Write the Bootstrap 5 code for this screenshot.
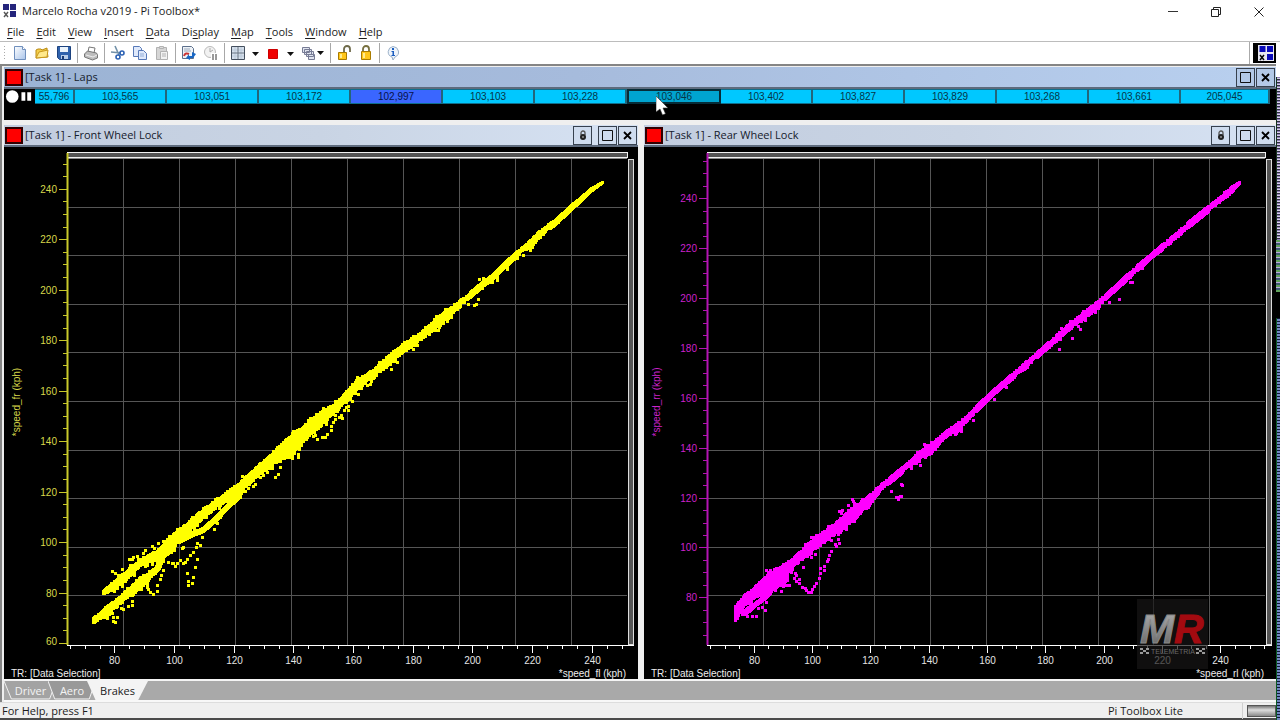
<!DOCTYPE html>
<html lang="en">
<head>
<meta charset="utf-8">
<meta name="viewport" content="width=device-width, initial-scale=1">
<title>Marcelo Rocha v2019 - Pi Toolbox*</title>
<link rel="stylesheet" href="https://cdn.jsdelivr.net/npm/bootstrap@5.3.0/dist/css/bootstrap.min.css">
<style>
  body { font: 12px/16px "Open Sans", "Noto Sans", sans-serif; color: #1c1c1c; background: #fff; }
  button { font: inherit; color: inherit; background: none; border: 0; padding: 0; }
  .ui-text { font-size: 11px; }
  .app-title { height: 22px; padding-left: 2px; }
  .win-btn { width: 43px; height: 22px; }
  .menu-row { height: 19px; gap: 12px; padding-left: 7px; }
  .menu-row a { color: #1c1c1c; text-decoration: none; }
  .menu-row u { text-underline-offset: 2px; }
  .tool-row { height: 23px; border-top: 1px solid #bcbcbc; padding-left: 9px; background: repeating-linear-gradient(180deg, #aaa 0 1px, transparent 1px 3px) no-repeat 4px 4px / 1px 15px; }
  .tool { width: 22px; height: 22px; }
  .tool-drop { width: 13px; }
  .tool-layers { width: 31px; }
  .tool-sep { width: 5px; height: 20px; background: linear-gradient(90deg, transparent 2px, #a8a8a8 2px, #a8a8a8 3px, transparent 3px); }
  .mdi-icon { width: 27px; height: 22px; border-left: 1px solid #aaa; padding-left: 3px; }
  .screen-edge { width: 4px; }
  .edge-noise { background:
      repeating-linear-gradient(180deg, #8f7fb8 0 1px, #d8d4e8 1px 2px, #303040 2px 3px);
      border-left: 1px solid #16341e; }
  .edge-mixed { background: repeating-linear-gradient(180deg, #62a35c 0 2px, #b9a8d8 2px 3px, #3c5a70 3px 5px); }
  .edge-blue { background: repeating-linear-gradient(180deg, #101838 0 1px, #7088c0 1px 3px); border-left: 1px solid #0a5a20; }
  .workspace { background: #efefef; border-top: 2px solid #858585; border-left: 2px solid #858585; padding: 1px 0 0 2px; }
  .panel-head { height: 22px; padding: 1px; border-bottom: 2px solid #5e6b7d; color: #15202c; }
  .laps-head { background: linear-gradient(90deg, #9bb3d4, #a6bbdc 45%, #b9d0ef); }
  .plot-head { background: linear-gradient(90deg, #c2cddf, #c9d4e4 50%, #d6e2f3); }
  .task-mark { width: 18px; height: 17px; background: #f00; border: 2px solid #300000; margin-right: 2px; }
  .frame-btn { width: 19px; height: 19px; border: 1px solid #37414e; background: #cfdcee; }
  .frame-max { margin-right: 1px; }
  .frame-lock { margin-right: 6px; }
  .laps-head .frame-btn { background: #b3c9e7; }
  .laps-body { background: #000; height: 31px; padding-right: 6px; }
  .laps-ctl { width: 31px; height: 15px; padding-left: 1px; }
  .lap { flex: 92 1 0; height: 15px; background: #00c8ff; border-right: 2px solid #24657a; border-top: 1px solid #0f6f8c; border-bottom: 1px solid #0f6f8c; color: #063446; font: 10px/13px "Liberation Sans", Arial, sans-serif; }
  .lap-part { flex-grow: 39; }
  .lap-end { flex-grow: 89; }
  .lap-best { background: #3a66ff; color: #06124a; }
  .lap-on { background: #00a4d0; border: 2px solid #062c38; line-height: 11px; }
  .pointer { left: 27px; top: 5px; z-index: 2; }
  .plots { gap: 6px; padding-top: 5px; }
  .plot-panel { flex: 634 1 0; min-width: 0; }
  .plot-panel + .plot-panel { flex-grow: 632; }
  .plot-body { background: #000; }
  .plot { flex: 1 1 0; width: 100%; min-height: 260px; display: block; font: 10px "Liberation Sans", Arial, sans-serif; }
  .brand { right: 68px; bottom: 10px; }
  .tab-row { height: 23px; background: #a9a9a9; border-top: 2px solid #f4f4f4; border-bottom: 2px solid #f8f8f8; }
  .sheet-tab { height: 19px; margin-right: -9px; color: #f4f4f4; font-size: 11px; line-height: 18px; }
  .sheet-tab svg { left: 0; top: 0; width: 100%; height: 100%; }
  .sheet-tab.is-on { color: #222; }
  .tab-a { width: 53px; } .tab-b { width: 48px; } .tab-c { width: 61px; }
  .status-row { height: 18px; background: #efefef; border-top: 1px solid #ddd; border-bottom: 2px solid #4a4a4a; padding-left: 2px; }
  .status-name { width: 135px; border-right: 1px solid #cfcfcf; }
  .status-grip { width: 29px; height: 12px; margin-left: 4px; border: 1px solid #555; background: linear-gradient(#777, #ddd 40%, #8a8a8a); }
</style>
</head>
<body>
<div class="d-flex flex-column min-vh-100">
  <header>
    <div class="app-title d-flex align-items-center ui-text">
      <svg width="16" height="16" viewBox="0 0 16 16" class="me-1"><path fill="#25257c" d="M1 1h6v6H1zM8 1h6v6H8zM8 8h6v6H8z"/><path d="M2 9l4 5M6 9l-4 5" stroke="#555" stroke-width="1.4"/></svg>
      <span class="flex-grow-1">Marcelo Rocha v2019 - Pi Toolbox*</span>
      <button class="win-btn" aria-label="Minimize"><svg width="12" height="12"><path d="M1 5.500h10" stroke="#333"/></svg></button>
      <button class="win-btn" aria-label="Restore"><svg width="12" height="12" fill="none" stroke="#222"><path d="M1.500 3.500h7v7h-7zM3.500 3.500v-2h7v7h-2"/></svg></button>
      <button class="win-btn" aria-label="Close"><svg width="12" height="12"><path d="M1.500 1.500l9 9M10.500 1.500l-9 9" stroke="#222"/></svg></button>
    </div>
    <nav class="menu-row d-flex align-items-center ui-text">
      <a href="#"><u>F</u>ile</a><a href="#"><u>E</u>dit</a><a href="#"><u>V</u>iew</a><a href="#"><u>I</u>nsert</a><a href="#"><u>D</u>ata</a><a href="#">Di<u>s</u>play</a><a href="#"><u>M</u>ap</a><a href="#"><u>T</u>ools</a><a href="#"><u>W</u>indow</a><a href="#"><u>H</u>elp</a>
    </nav>
    <div class="tool-row d-flex align-items-center" role="toolbar" aria-label="Standard">
      <button class="tool" aria-label="New"><svg width="16" height="16"><defs><linearGradient id="pg" x2="1" y2="1"><stop stop-color="#fff"/><stop offset="1" stop-color="#a9c4ea"/></linearGradient></defs><path d="M2.500 1.500h8l3 3v10h-11z" fill="url(#pg)" stroke="#6f8fbd"/><path d="M10.500 1.500v3h3" fill="#fff" stroke="#6f8fbd"/></svg></button>
      <button class="tool" aria-label="Open"><svg width="16" height="16"><path d="M2 13V5l2-1 3 0 1 1 5-2v2l1 7z" fill="#f4cf4a" stroke="#b98a14"/><path d="M2 13L5 7l9-2-1 7z" fill="#ffe98c" stroke="#c9981c"/></svg></button>
      <button class="tool" aria-label="Save"><svg width="16" height="16"><path d="M1.500 1.500h13v13h-11l-2-2z" fill="#2f62ad" stroke="#1c427f"/><path d="M4 2h8v5H4z" fill="#eaf3fc"/><path d="M5 10h7v4H5z" fill="#b9cde8"/><path d="M6 11h2v3H6z" fill="#173a75"/></svg></button>
      <span class="tool-sep"></span>
      <button class="tool" aria-label="Print"><svg width="16" height="16" stroke="#777"><path d="M5 7l1-5 6 1-1 5z" fill="#fff"/><path d="M1.500 9l3-3 9 2 1 2v3l-5 2-8-3z" fill="#bdbdbd"/><path d="M3 10l7 2 4-2" fill="none" stroke="#eee"/></svg></button>
      <span class="tool-sep"></span>
      <button class="tool" aria-label="Cut"><svg width="16" height="16" fill="none" stroke-width="1.6"><path d="M5 1l4 9M1 7l10 1" stroke="#7090a8"/><circle cx="12" cy="8" r="2" stroke="#2c62b4"/><circle cx="8" cy="12" r="2" stroke="#2c62b4"/></svg></button>
      <button class="tool" aria-label="Copy"><svg width="16" height="16" fill="#dfe9fb" stroke="#5779b8"><path d="M1.500 1.500h6l2 2v8h-8z"/><path d="M6.500 5.500h5l3 3v6h-8z"/><path d="M8 9h4M8 11h4" stroke="#93add8"/></svg></button>
      <button class="tool" aria-label="Paste"><svg width="16" height="16" stroke="#b2b2b2"><path d="M2.500 2.500h10v12h-10z" fill="#d6d6d6"/><path d="M5.500 1.500h4v2h-4z" fill="#ddd"/><path d="M6.500 6.500h7v8h-7z" fill="#f2f2f2"/><path d="M8 9h4M8 11h4"/></svg></button>
      <span class="tool-sep"></span>
      <button class="tool" aria-label="Update data"><svg width="16" height="16"><path d="M1.500 1.500h9l2 2v10h-11z" fill="#eef2f7" stroke="#5c6f8b"/><path d="M3 4h6M3 6h7" stroke="#9aa8ba"/><path d="M3 11c1-3 3-3 5-2" fill="none" stroke="#c33" stroke-width="2"/><path d="M5 13l3-4v2h3V7l4 2-3 4H9v2z" fill="#1867c4"/></svg></button>
      <button class="tool" aria-label="Pause clock"><svg width="16" height="16"><circle cx="7" cy="7" r="5.500" fill="#f2f2f2" stroke="#bbb"/><path d="M7 3v4l3-2" fill="none" stroke="#aaa"/><path d="M8 8h8v8H8z" fill="#fff"/><path d="M9 9h2v6H9zM12 9h2v6h-2z" fill="#999"/></svg></button>
      <span class="tool-sep"></span>
      <button class="tool" aria-label="Grid"><svg width="16" height="16"><path d="M1.500 1.500h13v13h-13z" fill="#d5dfeb" stroke="#444f5e"/><path d="M5 2v12M11 2v12M2 5h12M2 11h12" stroke="#bccada"/><path d="M8 2v12M2 8h12" stroke="#6a7684"/></svg></button>
      <button class="tool-drop" aria-label="Grid options"><svg width="7" height="4"><path d="M0 0h7l-3.500 4z" fill="#111"/></svg></button>
      <button class="tool" aria-label="Colour"><svg width="16" height="16"><path d="M3.500 4.500h9v9h-9z" fill="#f00000" stroke="#c00"/></svg></button>
      <button class="tool-drop" aria-label="Colour options"><svg width="7" height="4"><path d="M0 0h7l-3.500 4z" fill="#111"/></svg></button>
      <button class="tool-layers d-flex align-items-center justify-content-center" aria-label="Window layout"><svg width="16" height="16" fill="#dfe3ee" stroke="#777c95"><path d="M1.500 2.500h7v5h-7zM3.500 4.500h7v5h-7zM5.500 6.500h7v5h-7zM7.500 9.500h6v5h-6z"/></svg><svg width="7" height="4"><path d="M0 0h7l-3.500 4z" fill="#111"/></svg></button>
      <span class="tool-sep"></span>
      <button class="tool" aria-label="Unlock"><svg width="16" height="16"><path d="M8 8V4a3 3 0 0 1 6 0v3" fill="none" stroke="#6e6a4a" stroke-width="1.800"/><path d="M2.500 7.500h8v7h-8z" fill="#ffc61a" stroke="#a97b00"/><path d="M4 9h2v4H4z" fill="#ffec8f"/></svg></button>
      <button class="tool" aria-label="Lock"><svg width="16" height="16"><path d="M5 7V4a3 3 0 0 1 6 0v3" fill="none" stroke="#77703f" stroke-width="1.800"/><path d="M3.500 6.500h9v8h-9z" fill="#ffc61a" stroke="#a97b00"/><path d="M5 8h2v5H5z" fill="#ffec8f"/></svg></button>
      <span class="tool-sep"></span>
      <button class="tool" aria-label="About"><svg width="16" height="16"><path d="M8 1.500a6 5.500 0 0 1 2 10.500l-2 3-1-3A6 5.500 0 0 1 8 1.500z" fill="#eef4fb" stroke="#9ab0c8"/><path d="M7 3h2v2H7zM6.500 6H9v4h1v1H6.500v-1h1V7h-1z" fill="#1a5dc0"/></svg></button>
      <span class="mdi-icon ms-auto d-flex align-items-center"><svg width="23" height="20"><path d="M0 0h23v20H0z"/><path d="M5 2h16v16H5z" fill="#e6e6f0"/><path d="M6.500 3h6v6h-6zM14 3h6v6h-6zM14 11h6v6h-6z" fill="#0808b8"/><path d="M7 12l4 5M11 12l-4 5" stroke="#000" stroke-width="1.500"/></svg></span>
      <span class="screen-edge"></span>
    </div>
  </header>

  <div class="d-flex flex-grow-1">
    <main class="workspace d-flex flex-column flex-grow-1">
      <section aria-label="Laps">
        <div class="panel-head laps-head d-flex align-items-center ui-text">
          <span class="task-mark"></span><span class="flex-grow-1">[Task 1] - Laps</span>
          <button class="frame-btn frame-max d-flex align-items-center justify-content-center" aria-label="Maximize"><svg width="11" height="11"><path d="M.5.500h10v10H.5z" fill="none" stroke="#111"/></svg></button>
          <button class="frame-btn d-flex align-items-center justify-content-center" aria-label="Close"><svg width="9" height="9"><path d="M1 1l7 7M8 1L1 8" stroke="#000" stroke-width="1.800"/></svg></button>
        </div>
        <div class="laps-body d-flex align-items-start">
          <svg class="laps-ctl flex-shrink-0" viewBox="0 0 31 15"><circle cx="7.500" cy="7.500" r="6.500" fill="#fff"/><path d="M17 3h4v9h-4zM23 3h4v9h-4z" fill="#fff"/></svg>
          <button class="lap lap-part">55,796</button><button class="lap">103,565</button><button class="lap">103,051</button><button class="lap">103,172</button><button class="lap lap-best">102,997</button><button class="lap">103,103</button><button class="lap">103,228</button><button class="lap lap-on position-relative">103,046<svg class="pointer position-absolute" width="13" height="20"><path d="M0 0v16l4-3 2.500 6 3-1.300L7 12h5z" fill="#fff" stroke="#333" stroke-width=".6"/></svg></button><button class="lap">103,402</button><button class="lap">103,827</button><button class="lap">103,829</button><button class="lap">103,268</button><button class="lap">103,661</button><button class="lap lap-end">205,045</button>
        </div>
      </section>

      <div class="plots d-flex flex-grow-1">
        <section class="plot-panel d-flex flex-column" aria-label="Front Wheel Lock">
          <div class="panel-head plot-head d-flex align-items-center ui-text">
            <span class="task-mark"></span><span class="flex-grow-1">[Task 1] - Front Wheel Lock</span>
            <button class="frame-btn frame-lock d-flex align-items-center justify-content-center" aria-label="Lock"><svg width="8" height="11"><path d="M2 5V3a2 2 0 0 1 4 0v2" fill="none" stroke="#555" stroke-width="1.300"/><circle cx="4" cy="7" r="3" fill="#222"/><path d="M3 7h2" stroke="#ccc"/></svg></button>
            <button class="frame-btn frame-max d-flex align-items-center justify-content-center" aria-label="Maximize"><svg width="11" height="11"><path d="M.5.500h10v10H.5z" fill="none" stroke="#111"/></svg></button>
            <button class="frame-btn d-flex align-items-center justify-content-center" aria-label="Close"><svg width="9" height="9"><path d="M1 1l7 7M8 1L1 8" stroke="#000" stroke-width="1.800"/></svg></button>
          </div>
          <div class="plot-body d-flex flex-column flex-grow-1"><svg class="plot" id="front"></svg></div>
        </section>
        <section class="plot-panel d-flex flex-column" aria-label="Rear Wheel Lock">
          <div class="panel-head plot-head d-flex align-items-center ui-text">
            <span class="task-mark"></span><span class="flex-grow-1">[Task 1] - Rear Wheel Lock</span>
            <button class="frame-btn frame-lock d-flex align-items-center justify-content-center" aria-label="Lock"><svg width="8" height="11"><path d="M2 5V3a2 2 0 0 1 4 0v2" fill="none" stroke="#555" stroke-width="1.300"/><circle cx="4" cy="7" r="3" fill="#222"/><path d="M3 7h2" stroke="#ccc"/></svg></button>
            <button class="frame-btn frame-max d-flex align-items-center justify-content-center" aria-label="Maximize"><svg width="11" height="11"><path d="M.5.500h10v10H.5z" fill="none" stroke="#111"/></svg></button>
            <button class="frame-btn d-flex align-items-center justify-content-center" aria-label="Close"><svg width="9" height="9"><path d="M1 1l7 7M8 1L1 8" stroke="#000" stroke-width="1.800"/></svg></button>
          </div>
          <div class="plot-body d-flex flex-column flex-grow-1 position-relative">
            <svg class="plot" id="rear"></svg>
            <svg class="brand position-absolute" width="71" height="70" font-family="Liberation Sans, Arial, sans-serif">
              <defs><linearGradient id="silver" x2="0" y2="1"><stop stop-color="#b5b5b5"/><stop offset="1" stop-color="#5f5f5f"/></linearGradient></defs>
              <rect width="71" height="70" fill="#171515" opacity=".7"/>
              <text x="3" y="44" font-size="41" font-weight="700" font-style="italic" fill="url(#silver)" stroke="#8a8a8a">M</text>
              <text x="37" y="44" font-size="41" font-weight="700" font-style="italic" fill="#a30a10" stroke="#a30a10">R</text>
              <text x="36" y="55" font-size="7" text-anchor="middle" fill="#6a6a6a">TELEMETRIA</text>
              <path d="M3 49h3v2H3zM9 49h3v2H9zM6 51h3v2H6zM3 53h3v2H3zM9 53h3v2H9zM59 49h3v2h-3zM65 49h3v2h-3zM62 51h3v2h-3zM59 53h3v2h-3zM65 53h3v2h-3z" fill="#999"/>
            </svg>
          </div>
        </section>
      </div>

      <div class="tab-row d-flex" role="tablist">
        <button class="sheet-tab tab-a position-relative" role="tab"><svg class="position-absolute" viewBox="0 0 100 18" preserveAspectRatio="none"><path d="M0 0l14 17h72L99 0" fill="#a3a3a3" stroke="#f0f0f0" vector-effect="non-scaling-stroke"/></svg><span class="position-relative">Driver</span></button>
        <button class="sheet-tab tab-b position-relative" role="tab"><svg class="position-absolute" viewBox="0 0 100 18" preserveAspectRatio="none"><path d="M0 0l14 17h72L99 0" fill="#999" stroke="#f0f0f0" vector-effect="non-scaling-stroke"/></svg><span class="position-relative">Aero</span></button>
        <button class="sheet-tab tab-c is-on position-relative" role="tab" aria-selected="true"><svg class="position-absolute" viewBox="0 0 100 18" preserveAspectRatio="none"><path d="M0 0l14 18h70L100 0z" fill="#f4f4f4"/></svg><span class="position-relative">Brakes</span></button>
      </div>
    </main>
    <div class="screen-edge d-flex flex-column">
      <div style="height:13px"></div>
      <div class="edge-noise" style="height:163px"></div>
      <div class="edge-mixed" style="height:52px"></div>
      <div style="height:26px;background:#000"></div>
      <div class="edge-blue flex-grow-1"></div>
    </div>
  </div>

  <footer class="d-flex">
    <div class="status-row d-flex align-items-center flex-grow-1 ui-text">
      <span class="flex-grow-1">For Help, press F1</span>
      <span class="status-name">Pi Toolbox Lite</span>
      <span class="status-grip"></span>
    </div>
    <div class="screen-edge edge-blue"></div>
  </footer>
</div>

<script>
// Band rows are [x, top, bottom] on a sheet whose plot area starts at x0,y0.
// Loose groups hold samples in thirds of a sheet unit, measured from ox,oy.
const charts = {
  front: {
    colour: '#ffff00', axis: '#c9c92a', label: '#d8d84a', x0: 67, y0: 159,
    xr: [64.1, 251.8], yr: [59.2, 251.8], xName: '*speed_fl (kph)', yName: '*speed_fr (kph)',
    bands: [
      [[602,181,183],[590,188,192],[580,197,202],[571,204,210],[555,219,225],[545,225,233],[530,238,248],[517,250,257],[503,263,269],[492,274,280],[482,281,287],[470,291,298],[460,299,307],[443,311,323],[425,327,337],[410,338,347],[393,350,362],[373,368,378],[357,378,390],[337,400,412],[317,413,430],[303,425,442],[292,432,457],[277,447,463],[257,465,477],[240,481,494],[230,488,500],[217,497,508],[200,510,521],[180,527,541],[167,538,556],[157,549,566]],
      [[157,549,560],[143,556,566],[130,566,577],[117,577,588],[110,583,592],[103,590,594]],
      [[163,555,562],[157,564,573],[147,573,583],[133,583,595],[117,597,607],[107,605,617],[98,613,621],[93,617,623]],
      [[240,492,497],[225,506,511],[217,514,520],[203,527,532],[190,532,537],[178,537,543]]
    ],
    loose: [
      [0,480,'665 100 660 112 650 128 642 148 605 170 600 195 590 188 587 200 592 237 578 215 570 225 562 238 555 245 550 250 545 205 548 200 540 240 530 250 525 258 520 250 585 262 562 280 578 290 563 303 575 308 565 315 515 250 505 245 490 270 482 285 480 298 470 315 472 332 460 342 450 335 440 322 445 328 335 272 345 278 365 268 388 237 400 230 395 238 412 228 430 218 435 210 457 198 462 205 475 190 490 183 340 410 352 410 345 425 338 424 335 400 395 375 370 388 385 378 395 363 362 385'],
      [220,340,'180 380 174 402 166 411 235 350 222 340 235 342 155 385 140 395 128 405 120 410 105 432 100 437 85 445 75 452 60 470 50 478 292 296 305 290 315 290 322 282 333 270 333 257 340 245 345 225 345 237 358 230 367 233 362 225 372 210 383 210 385 198 378 200 395 182 390 175 415 162 405 160 513 88 530 65 440 135 450 132 590 15 65 408 280 288 286 285'],
      [400,150,'203 461 221 466 229 463 234 447 275 395 290 390 292 380 268 395 322 358 320 350 370 315 350 325 245 413 238 388 248 385 105 540 115 540 130 518 120 525 145 505 95 540 118 530 50 585 38 597 18 600 30 590 475 215 420 262']
    ]
  },
  rear: {
    colour: '#ff00ff', axis: '#b414b4', label: '#cc22cc', x0: 707, y0: 159,
    xr: [64, 255.3], yr: [60.9, 255.7], xName: '*speed_rl (kph)', yName: '*speed_rr (kph)',
    bands: [
      [[1241,181,184],[1230,188,196],[1210,205,212],[1190,221,228],[1170,238,246],[1153,253,258],[1133,269,277],[1120,281,287],[1108,292,298],[1098,300,310],[1083,312,321],[1068,324,332],[1057,334,342],[1043,347,353],[1027,360,369],[1007,378,384],[993,390,396],[977,405,412],[960,421,431],[947,429,437],[932,442,454],[920,450,460],[903,466,473],[890,477,484],[883,482,490],[870,494,505],[857,503,519],[840,517,532],[820,533,546],[807,543,554],[792,557,569],[777,568,585],[767,573,592],[753,587,600],[743,595,608],[735,605,623]],
      [[787,573,583],[777,577,588],[765,594,599],[755,602,606],[742,610,618]]
    ],
    loose: [
      [640,480,'787 14 755 33 783 47 775 55 770 50 597 92 608 90 605 98 637 58 645 68 640 62 627 75 595 178 597 188 590 198 587 193 573 180 573 214 567 225 565 236 563 243 553 257 542 263 553 270 542 278 538 295 530 308 522 318 517 328 514 336 505 335 500 330 495 325 487 320 477 308 470 303 478 296 465 280 463 295 468 285 490 260 424 332 440 315 448 315 380 270 390 270 385 275 375 390 368 382 378 365 350 408 335 408 320 408 355 385 345 375 525 222 515 230 515 172 530 165 315 345 295 365 285 378 372 295'],
      [860,160,'782 417 751 425 815 365 820 366 852 325 664 507 658 498 641 533 600 566 605 538 608 504 635 482 442 681 405 718 343 780 183 915 155 925 126 973 96 994 195 852 203 854 113 1010 124 1008 117 1016 680 478 570 545']
    ]
  }
};

function generator(seed) {
  return () => (seed = (seed * 1103515245 + 12345) % 2147483648) / 2147483648;
}

function draw(id) {
  const c = charts[id], svg = document.getElementById(id);
  const W = svg.clientWidth, H = svg.clientHeight;
  const L = 63, T = 12, R = W - 11, B = H - 34, w = R - L, h = B - T;
  const rnd = generator(id.length * 977);
  const line = (x1, y1, x2, y2, col, t = 1) => `<path d="M${x1} ${y1}L${x2} ${y2}" stroke="${col}" stroke-width="${t}"/>`;
  const text = (x, y, s, col, anchor) => `<text x="${x}" y="${y}" fill="${col}" text-anchor="${anchor}">${s}</text>`;
  let out = '';
  for (let i = 1; i < 10; i++) {
    const gx = Math.round(L + w * i / 10) + .5, gy = Math.round(T + h * i / 10) - .5;
    out += line(gx, T, gx, B, '#555') + line(L, gy, R, gy, '#555');
  }
  const dots = [];
  const dot = (x, y) => dots.push(`M${Math.round(L + (x - c.x0) * w / 560) - 1} ${Math.round(T + (y - c.y0) * h / 486) - 1}h3v3h-3z`);
  for (const band of c.bands) for (let i = 1; i < band.length; i++) {
    const [xa, ta, ba] = band[i - 1], [xb, tb, bb] = band[i];
    const steps = Math.abs(xa - xb);
    for (let s = 0; s <= steps; s++) {
      const f = s / steps, x = xa + (xb - xa) * f;
      let top = ta + (tb - ta) * f + 1, bot = ba + (bb - ba) * f - 1;
      const wide = bot - top;
      if (wide > 5) { top += rnd() * 2; bot -= rnd() * 3; }
      const n = Math.max(1, Math.round((bot - top) / 2.4));
      for (let k = 0; k <= n; k++) dot(x, top + (bot - top) * k / n);
      if (wide > 7 && rnd() < .25) dot(x, rnd() < .4 ? top - 2 : bot + 3);
    }
  }
  for (const [ox, oy, list] of c.loose) {
    const v = list.split(' ').map(Number);
    for (let i = 0; i < v.length; i += 2) dot(ox + v[i] / 3, oy + v[i + 1] / 3);
  }
  out += `<path d="${dots.join('')}" fill="${c.colour}"/>`;
  out += `<rect x="${L + .5}" y="${T - 6.5}" width="${w}" height="5" fill="#555" stroke="#f2f2f2"/>`;
  out += line(L, T - .5, R, T - .5, '#8a8a8a');
  out += `<rect x="${R + 1.5}" y="${T + .5}" width="5" height="${h - 1}" fill="#555" stroke="#ddd"/>`;
  out += line(L + .5, T - 6, L + .5, B, c.axis, 2) + line(L, B + .5, R + 7, B + .5, '#fff');
  for (let v = 65; v < 256; v += 5) {
    const big = v % 20 === 0;
    const x = Math.round(L + (v - c.xr[0]) / (c.xr[1] - c.xr[0]) * w) + .5;
    const y = Math.round(B - (v - c.yr[0]) / (c.yr[1] - c.yr[0]) * h) + .5;
    if (x < R) out += line(x, B, x, B + (big ? 8 : 4), '#fff');
    if (y > T) out += line(L - (big ? 8 : 4), y, L, y, c.axis);
    if (big) out += text(x, B + 19, v, '#e4e4e4', 'middle') + text(L - 10, y + 3, v, c.label, 'end');
  }
  if (c.yr[0] < 60) out += line(L - 8, B - 1.5, L, B - 1.5, c.axis) + text(L - 10, B, 60, c.label, 'end');
  out += text(7, H - 2, 'TR: [Data Selection]', '#eee', 'start') + text(W - 12, H - 2, c.xName, '#eee', 'end');
  const my = T + h / 2;
  out += `<text transform="translate(16 ${my}) rotate(-90)" fill="${c.label}" text-anchor="middle">${c.yName}</text>`;
  svg.innerHTML = out;
}
const watch = new ResizeObserver(list => list.forEach(e => draw(e.target.id)));
Object.keys(charts).forEach(id => { draw(id); watch.observe(document.getElementById(id)); });
</script>
<script src="https://cdn.jsdelivr.net/npm/bootstrap@5.3.0/dist/js/bootstrap.bundle.min.js"></script>
</body>
</html>
